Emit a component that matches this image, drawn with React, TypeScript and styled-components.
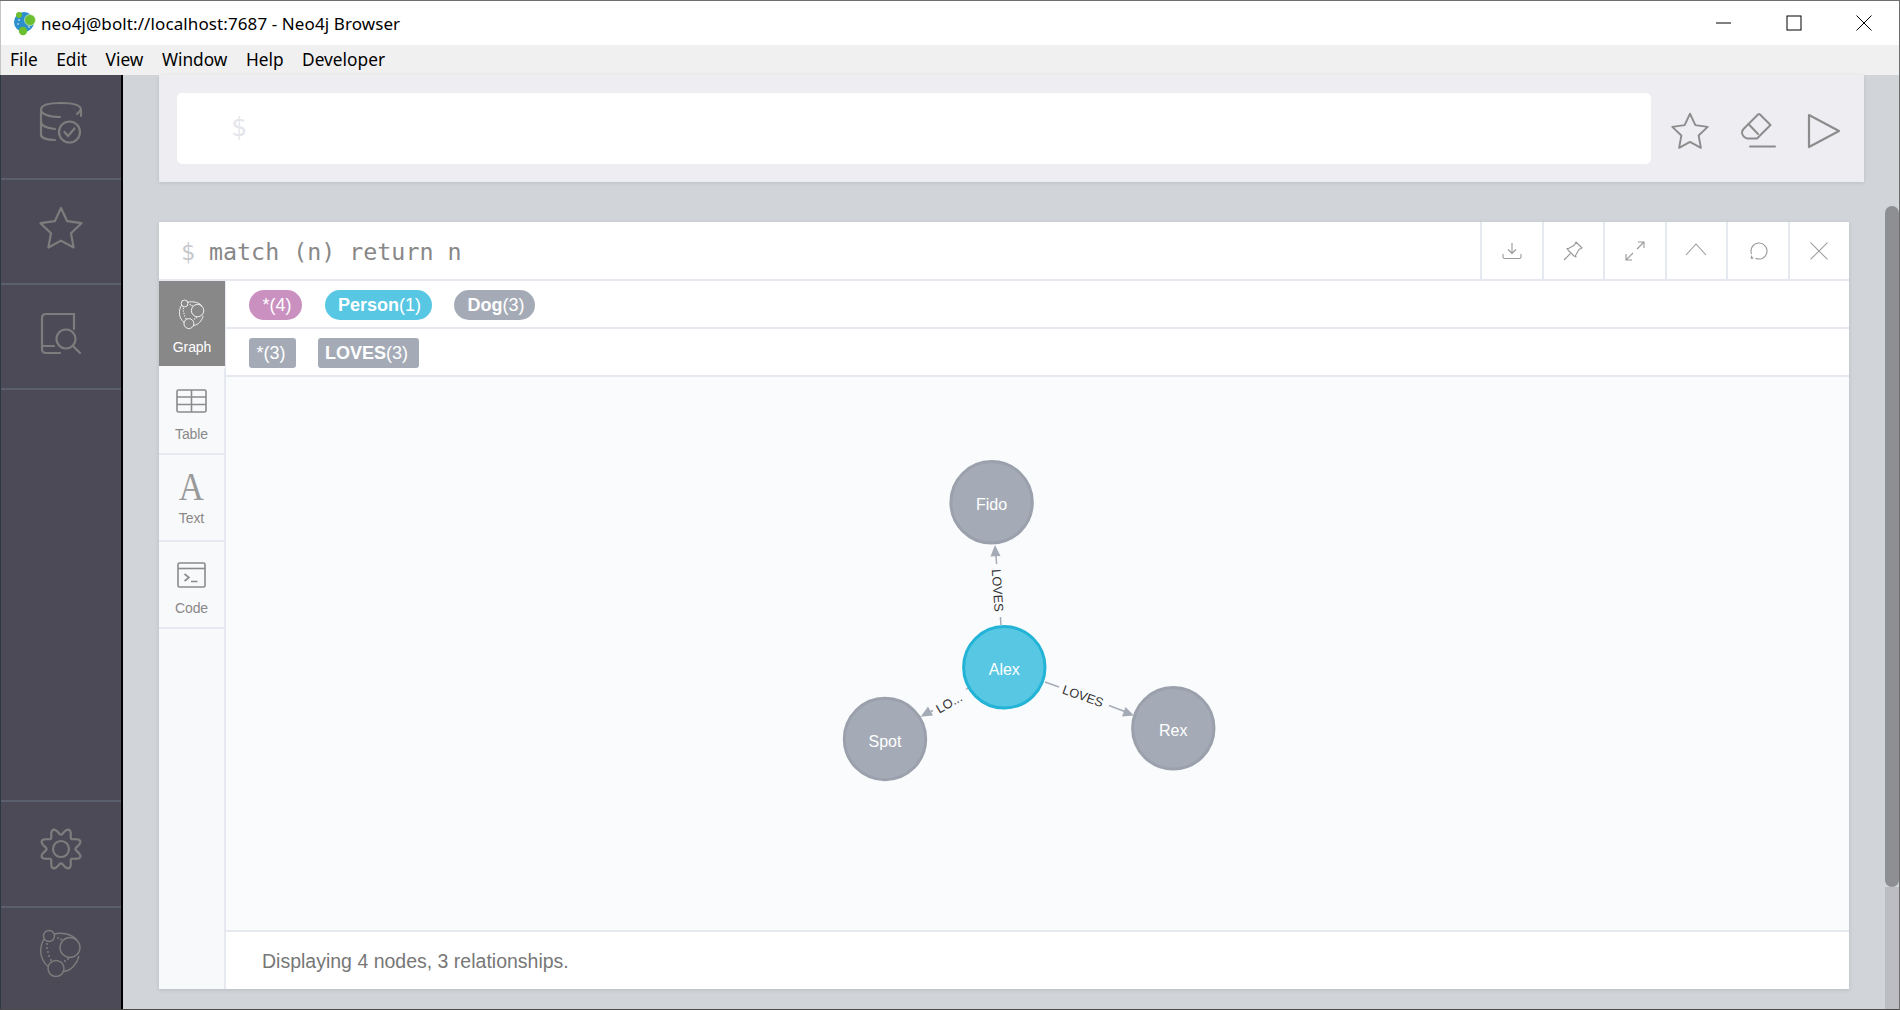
import styled, { createGlobalStyle } from "styled-components";

const GlobalStyle = createGlobalStyle`
  html, body {
    margin: 0;
    padding: 0;
    background: #d1d5da;
  }
  * {
    box-sizing: border-box;
  }
`;

const Window = styled.div`
  width: 1900px;
  height: 1010px;
  display: flex;
  flex-direction: column;
  overflow: hidden;
  border-top: 1px solid #6e6e6e;
  border-right: 1px solid #6e6e6e;
  border-bottom: 1px solid #4a4a4a;
  font-family: "Liberation Sans", Arial, sans-serif;
`;

const TitleBar = styled.div`
  height: 44px;
  flex: none;
  display: flex;
  align-items: center;
  background: #fff;
  padding-left: 12px;
  border-left: 1px solid #c4c4c4;
`;

const TitleText = styled.span`
  margin-left: 4px;
  font-family: "Noto Sans", sans-serif;
  font-size: 17px;
  letter-spacing: 0.1px;
  color: #000;
  white-space: nowrap;
`;

const WindowControls = styled.div`
  margin-left: auto;
  display: flex;
  align-items: center;
`;

const ControlBox = styled.span`
  width: 70px;
  height: 44px;
  display: flex;
  align-items: center;
  justify-content: center;
`;

const MenuBar = styled.div`
  height: 30px;
  flex: none;
  display: flex;
  align-items: center;
  background: #f0f0f0;
  padding: 0 0 2px 9px;
  gap: 18.5px;
  border-left: 1px solid #c4c4c4;
`;

const MenuItem = styled.span`
  font-family: "Noto Sans", sans-serif;
  font-size: 17.3px;
  color: #000;
`;

const Body = styled.div`
  flex: 1;
  min-height: 0;
  display: flex;
`;

const Sidebar = styled.nav`
  width: 123px;
  flex: none;
  display: flex;
  flex-direction: column;
  justify-content: space-between;
  background: #4d4a57;
  border-left: 1px solid #2b3a42;
  border-right: 2px solid #000;
`;

const SideGroup = styled.div`
  display: flex;
  flex-direction: column;
`;

const SideItem = styled.div<{ $top?: boolean; $height: number; $pad?: number }>`
  height: ${(p) => p.$height}px;
  display: flex;
  align-items: center;
  justify-content: center;
  padding-bottom: ${(p) => p.$pad ?? 8}px;
  ${(p) =>
    p.$top
      ? "border-top: 2px solid #5b5f6e;"
      : "border-bottom: 2px solid #5b5f6e;"}
`;

const Main = styled.main`
  flex: 1;
  min-width: 0;
  padding-left: 36px;
  display: flex;
  flex-direction: column;
`;

const EditorFrame = styled.section`
  width: 1705px;
  height: 107px;
  flex: none;
  display: flex;
  align-items: center;
  padding-left: 18px;
  background: #eeeef2;
  box-shadow: 0 1px 4px rgba(0, 0, 0, 0.1);
`;

const EditorInput = styled.div`
  width: 1474px;
  height: 71px;
  display: flex;
  align-items: center;
  padding: 0 0 4px 54px;
  background: #fff;
  border-radius: 5px;
`;

const Prompt = styled.span<{ $light?: boolean }>`
  font-family: "DejaVu Sans Mono", monospace;
  font-size: ${(p) => (p.$light ? "26px" : "23.3px")};
  color: ${(p) => (p.$light ? "#e4e6ec" : "#c6c9cc")};
`;

const EditorActions = styled.div`
  display: flex;
  align-items: center;
  margin: 5px 0 0 20px;
  gap: 30px;
`;

const Result = styled.section`
  width: 1690px;
  height: 767px;
  margin-top: 40px;
  flex: none;
  display: flex;
  flex-direction: column;
  background: #fff;
  box-shadow: 0 1px 4px rgba(0, 0, 0, 0.12);
`;

const ResultHeader = styled.header`
  height: 59px;
  flex: none;
  display: flex;
  align-items: stretch;
  border-bottom: 2px solid #e6e9ef;
`;

const Command = styled.div`
  flex: 1;
  display: flex;
  align-items: center;
  padding: 2px 0 0 22px;
  gap: 14px;
  font-family: "DejaVu Sans Mono", monospace;
  font-size: 23.3px;
  color: #888;
`;

const HeaderButton = styled.div`
  width: 61.5px;
  display: flex;
  align-items: center;
  justify-content: center;
  border-left: 2px solid #e6e9ef;
`;

const ResultBody = styled.div`
  flex: 1;
  min-height: 0;
  display: flex;
`;

const Tabs = styled.div`
  width: 67px;
  flex: none;
  display: flex;
  flex-direction: column;
  background: #f8f9fb;
  border-right: 2px solid #e6e9ef;
`;

const Tab = styled.div<{ $active?: boolean }>`
  height: 87px;
  flex: none;
  display: flex;
  flex-direction: column;
  align-items: center;
  padding-top: 13px;
  font-size: 14px;
  letter-spacing: -0.1px;
  background: ${(p) => (p.$active ? "#888" : "transparent")};
  background-clip: padding-box;
  color: ${(p) => (p.$active ? "#fff" : "#888")};
  border-bottom: 2px solid ${(p) => (p.$active ? "#f8f9fb" : "#e6e9ef")};
  margin-right: ${(p) => (p.$active ? "-1px" : "0")};
`;

const TabIcon = styled.div`
  height: 40px;
  display: flex;
  align-items: center;
  justify-content: center;
`;

const TabLabel = styled.span<{ $lift?: boolean }>`
  margin-top: ${(p) => (p.$lift ? "0" : "3px")};
  line-height: 20px;
`;

const TextGlyph = styled.span`
  font-family: "Liberation Serif", serif;
  font-size: 40px;
  line-height: 40px;
  color: #9a9a9a;
  transform: translateY(-1px) scaleX(0.87);
`;

const Content = styled.div`
  flex: 1;
  min-width: 0;
  display: flex;
  flex-direction: column;
`;

const LegendRow = styled.div<{ $gap: number }>`
  height: 48px;
  flex: none;
  display: flex;
  align-items: flex-start;
  padding: 9px 0 0 23px;
  gap: ${(p) => p.$gap}px;
  border-bottom: 2px solid #e6e9ef;
`;

const Chip = styled.span<{ $color: string; $pill?: boolean }>`
  height: 30px;
  display: inline-flex;
  align-items: center;
  padding: ${(p) => (p.$pill ? "0 10.5px 0 13.5px" : "0 10.5px 0 7.5px")};
  border-radius: ${(p) => (p.$pill ? "15px" : "3px")};
  background: ${(p) => p.$color};
  color: #fff;
  font-size: 18px;
  white-space: nowrap;
`;

const ChipName = styled.b`
  font-weight: 700;
`;

const GraphArea = styled.div`
  flex: 1;
  min-height: 0;
  background: #fafbfd;
`;

const GraphSvg = styled.svg`
  display: block;
  width: 100%;
  height: 100%;
`;

const NodeLabel = styled.text`
  font-family: "Liberation Sans", Arial, sans-serif;
  font-size: 16px;
  fill: #fff;
  text-anchor: middle;
`;

const EdgeLabel = styled.text`
  font-family: "Liberation Sans", Arial, sans-serif;
  font-size: 12.75px;
  fill: #333;
  text-anchor: middle;
`;

const Footer = styled.footer`
  height: 59px;
  flex: none;
  display: flex;
  align-items: center;
  padding: 1px 0 0 36px;
  border-top: 2px solid #e6e9ef;
  font-size: 19.5px;
  color: #777;
`;

const Scrollbar = styled.div`
  width: 14px;
  flex: none;
  display: flex;
  flex-direction: column;
`;

const ScrollGap = styled.div`
  height: 131px;
  flex: none;
`;

const ScrollThumb = styled.div`
  height: 681px;
  flex: none;
  background: #8e8f93;
  border-radius: 8px;
`;

const ScrollTrack = styled.div`
  flex: 1;
  background: #bcbdc2;
`;

function AppIcon() {
  return (
    <svg width="24" height="26" viewBox="0 0 24 26">
      <circle cx="11" cy="12" r="10" fill="#2a8fcb" />
      <circle cx="17" cy="10" r="5.5" fill="#6cbf30" stroke="#e8f4ea" strokeWidth="0.6" />
      <circle cx="6" cy="5" r="3" fill="#6cbf30" />
      <circle cx="10" cy="21" r="4.2" fill="#6cbf30" />
      <circle cx="6" cy="10" r="0.8" fill="#fff" />
      <circle cx="5" cy="14" r="0.8" fill="#fff" />
      <circle cx="16" cy="17" r="0.8" fill="#fff" />
    </svg>
  );
}

function MinIcon() {
  return (
    <svg width="16" height="2" viewBox="0 0 16 2">
      <path d="M0 1H15" stroke="#000" strokeWidth="1" />
    </svg>
  );
}

function MaxIcon() {
  return (
    <svg width="16" height="16" viewBox="0 0 16 16" fill="none">
      <rect x="1" y="1" width="14" height="14" stroke="#000" strokeWidth="1" />
    </svg>
  );
}

function CloseIcon({ size, color }: { size: number; color: string }) {
  return (
    <svg width={size} height={size} viewBox="0 0 16 16" fill="none">
      <path d="M0.5 0.5L15.5 15.5M15.5 0.5L0.5 15.5" stroke={color} strokeWidth={size > 16 ? 0.9 : 1} />
    </svg>
  );
}

function DatabaseIcon() {
  return (
    <svg width="44" height="44" viewBox="0 0 44 44" fill="none" stroke="#7d7d7d" strokeWidth="2.2" strokeLinecap="round">
      <path d="M2 9C2 4 10 2 22 2C34 2 42 4 42 9V15" />
      <path d="M42 9L38 13" />
      <path d="M2 9V34C2 37 8 39 16 39" />
      <path d="M2 9C2 13 10 16 21 16" />
      <path d="M2 21C2 25 8 27 16 28" />
      <circle cx="30.5" cy="31" r="10.5" />
      <path d="M25.5 31L29 35L35.5 27.5" />
    </svg>
  );
}

function StarIcon({ size, color, width }: { size: number; color: string; width: number }) {
  return (
    <svg width={size} height={size} viewBox="0 0 44 44" fill="none" stroke={color} strokeWidth={width} strokeLinejoin="round">
      <path d="M22 2L28.2 15.2L42.5 17.2L32 27.2L34.6 41.5L22 34.6L9.4 41.5L12 27.2L1.5 17.2L15.8 15.2Z" />
    </svg>
  );
}

function SearchDocIcon() {
  return (
    <svg width="44" height="44" viewBox="0 0 44 44" fill="none" stroke="#7d7d7d" strokeWidth="2.2" strokeLinecap="round">
      <path d="M35 18V3H7C4 3 3 5 3 7V38C3 41 4 42 7 42H21" />
      <path d="M3 35H15" />
      <circle cx="27" cy="28" r="9.5" />
      <path d="M34 35L41 42" />
    </svg>
  );
}

function GearIcon() {
  // wavy ring with eight lobes
  const points: string[] = [];
  for (let i = 0; i < 160; i++) {
    const a = (i / 160) * Math.PI * 2;
    const r = 17.6 - 3.2 * Math.cos(8 * a);
    points.push(`${(22 + r * Math.sin(a)).toFixed(2)},${(22 - r * Math.cos(a)).toFixed(2)}`);
  }
  return (
    <svg width="44" height="44" viewBox="0 0 44 44" fill="none" stroke="#7d7d7d" strokeWidth="2.2">
      <polygon points={points.join(" ")} />
      <circle cx="22" cy="22" r="8" />
    </svg>
  );
}

function Neo4jLogo({ width, height, color }: { width: number; height: number; color: string }) {
  return (
    <svg width={width} height={height} viewBox="0 0 42 48" fill="none" stroke={color} strokeWidth="1.4">
      <circle cx="9" cy="7" r="5.5" />
      <circle cx="30" cy="18.5" r="10" />
      <circle cx="16" cy="39.5" r="8" />
      <path d="M4 10C0 16 0 24 2 29C3.5 33 6 36 8.5 38" />
      <path d="M14 5C22 3 32 5 37 11" />
      <path d="M23.5 42.5C31 42 37 35 39 27" />
      <g fill={color} stroke="none">
        <circle cx="18" cy="9" r="1" />
        <circle cx="21" cy="10.5" r="1" />
        <circle cx="7" cy="15" r="1" />
        <circle cx="7" cy="19" r="1" />
        <circle cx="8" cy="23" r="1" />
        <circle cx="9" cy="27" r="1" />
        <circle cx="11" cy="31" r="1" />
        <circle cx="25" cy="32" r="1" />
        <circle cx="28" cy="30" r="1" />
      </g>
    </svg>
  );
}

function EraserIcon() {
  return (
    <svg width="38" height="38" viewBox="0 0 38 38" fill="none" stroke="#8c8c8c" strokeWidth="2" strokeLinecap="round" strokeLinejoin="round">
      <path d="M21 2.5L31.5 13L18 26.5H8.5C6 26.5 2.5 23 3 20C3.2 18.5 4 17.5 5 16.5L19 2.5C19.6 2 20.4 2 21 2.5Z" />
      <path d="M9.5 12L19 22" />
      <path d="M11 34.5H36" />
    </svg>
  );
}

function PlayIcon() {
  return (
    <svg width="34" height="36" viewBox="0 0 34 36" fill="none" stroke="#8c8c8c" strokeWidth="2.2" strokeLinejoin="round">
      <path d="M2 2L32 18L2 34Z" />
    </svg>
  );
}

function DownloadIcon() {
  return (
    <svg width="20" height="18" viewBox="0 0 20 18" fill="none" stroke="#999" strokeWidth="1.1">
      <path d="M10 1V11M6 7.5L10 11.5L14 7.5" />
      <path d="M1 12V15C1 16 2 16.5 3 16.5H17C18 16.5 19 16 19 15V12" />
    </svg>
  );
}

function PinIcon() {
  return (
    <svg width="20" height="20" viewBox="0 0 20 20" fill="none" stroke="#999" strokeWidth="1.1" strokeLinejoin="round">
      <path d="M13 1L19 7L16 8.5L12.5 14.5L13 16L11 15L5 9L4 7.5L5.5 7.5L11.5 4L13 1Z" />
      <path d="M7.5 12.5L1 19" />
    </svg>
  );
}

function ExpandIcon() {
  return (
    <svg width="20" height="20" viewBox="0 0 20 20" fill="none" stroke="#999" strokeWidth="1.1">
      <path d="M12 8L19 1M13 1H19V7" />
      <path d="M8 12L1 19M1 13V19H7" />
    </svg>
  );
}

function ChevronUpIcon() {
  return (
    <svg width="22" height="16" viewBox="0 0 22 16" fill="none" stroke="#999" strokeWidth="1.1">
      <path d="M1 12L11 1L21 12" />
    </svg>
  );
}

function RefreshIcon() {
  return (
    <svg width="20" height="18" viewBox="0 0 20 18" fill="none" stroke="#999" strokeWidth="1.1">
      <path d="M3.6 12A8 8 0 1 1 7.5 16.2" />
      <path d="M2.5 16.8H5.5L3.3 13Z" fill="#999" stroke="none" />
    </svg>
  );
}

function TableIcon() {
  return (
    <svg width="31" height="24" viewBox="0 0 31 24" fill="none" stroke="#8b8b8b" strokeWidth="1.6">
      <rect x="1" y="1" width="29" height="22" rx="1.5" />
      <path d="M1 8H30M1 15.5H30M15.5 1V23" />
    </svg>
  );
}

function CodeIcon() {
  return (
    <svg width="29" height="26" viewBox="0 0 29 26" fill="none" stroke="#8b8b8b" strokeWidth="1.6">
      <rect x="1" y="1" width="27" height="24" rx="1.5" />
      <path d="M1 6.5H28" />
      <path d="M7.5 12L12 15.5L7.5 19M14 19.5H20.5" />
    </svg>
  );
}

type EdgeTextProps = { x: number; y: number; angle: number; text: string };

function EdgeText({ x, y, angle, text }: EdgeTextProps) {
  return (
    <EdgeLabel x={x} y={y} dy="4.5" transform={`rotate(${angle} ${x} ${y})`}>
      {text}
    </EdgeLabel>
  );
}

const nodes = [
  { name: "Fido", x: 991.6, y: 502.3, fill: "#a5abb6", stroke: "#9aa1ac" },
  { name: "Alex", x: 1004.3, y: 667.3, fill: "#57c7e3", stroke: "#23b3d7" },
  { name: "Spot", x: 885, y: 739, fill: "#a5abb6", stroke: "#9aa1ac" },
  { name: "Rex", x: 1173.3, y: 728.3, fill: "#a5abb6", stroke: "#9aa1ac" },
];

export default function App() {
  return (
    <>
      <GlobalStyle />
      <Window>
        <TitleBar>
          <AppIcon />
          <TitleText>neo4j@bolt://localhost:7687 - Neo4j Browser</TitleText>
          <WindowControls>
            <ControlBox><MinIcon /></ControlBox>
            <ControlBox><MaxIcon /></ControlBox>
            <ControlBox><CloseIcon size={16} color="#000" /></ControlBox>
          </WindowControls>
        </TitleBar>
        <MenuBar>
          <MenuItem>File</MenuItem>
          <MenuItem>Edit</MenuItem>
          <MenuItem>View</MenuItem>
          <MenuItem>Window</MenuItem>
          <MenuItem>Help</MenuItem>
          <MenuItem>Developer</MenuItem>
        </MenuBar>
        <Body>
          <Sidebar>
            <SideGroup>
              <SideItem $height={105}><DatabaseIcon /></SideItem>
              <SideItem $height={105}><StarIcon size={44} color="#7d7d7d" width={2.2} /></SideItem>
              <SideItem $height={105}><SearchDocIcon /></SideItem>
            </SideGroup>
            <SideGroup>
              <SideItem $top $height={106} $pad={10}><GearIcon /></SideItem>
              <SideItem $top $height={103} $pad={12}><Neo4jLogo width={42} height={48} color="#7d7d7d" /></SideItem>
            </SideGroup>
          </Sidebar>
          <Main>
            <EditorFrame>
              <EditorInput>
                <Prompt $light>$</Prompt>
              </EditorInput>
              <EditorActions>
                <StarIcon size={38} color="#8c8c8c" width={2.2} />
                <EraserIcon />
                <PlayIcon />
              </EditorActions>
            </EditorFrame>
            <Result>
              <ResultHeader>
                <Command>
                  <Prompt>$</Prompt>
                  <span>match (n) return n</span>
                </Command>
                <HeaderButton><DownloadIcon /></HeaderButton>
                <HeaderButton><PinIcon /></HeaderButton>
                <HeaderButton><ExpandIcon /></HeaderButton>
                <HeaderButton><ChevronUpIcon /></HeaderButton>
                <HeaderButton><RefreshIcon /></HeaderButton>
                <HeaderButton><CloseIcon size={18} color="#999" /></HeaderButton>
              </ResultHeader>
              <ResultBody>
                <Tabs>
                  <Tab $active>
                    <TabIcon><Neo4jLogo width={26} height={30} color="#fff" /></TabIcon>
                    <TabLabel>Graph</TabLabel>
                  </Tab>
                  <Tab>
                    <TabIcon><TableIcon /></TabIcon>
                    <TabLabel>Table</TabLabel>
                  </Tab>
                  <Tab>
                    <TabIcon><TextGlyph>A</TextGlyph></TabIcon>
                    <TabLabel $lift>Text</TabLabel>
                  </Tab>
                  <Tab>
                    <TabIcon><CodeIcon /></TabIcon>
                    <TabLabel>Code</TabLabel>
                  </Tab>
                </Tabs>
                <Content>
                  <LegendRow $gap={22.5}>
                    <Chip $pill $color="#c990c0">*(4)</Chip>
                    <Chip $pill $color="#57c7e3"><ChipName>Person</ChipName>(1)</Chip>
                    <Chip $pill $color="#a5abb6"><ChipName>Dog</ChipName>(3)</Chip>
                  </LegendRow>
                  <LegendRow $gap={21.5}>
                    <Chip $color="#a5abb6">*(3)</Chip>
                    <Chip $color="#a5abb6"><ChipName>LOVES</ChipName>(3)</Chip>
                  </LegendRow>
                  <GraphArea>
                    <GraphSvg viewBox="226 377 1623 553">
                      <g stroke="#a5abb6" strokeWidth="1.5" fill="none">
                        <path d="M1001 625L1000.4 617" />
                        <path d="M996.6 564L995.8 554" />
                        <path d="M1045 682L1059 687" />
                        <path d="M1109 705.5L1126 712" />
                        <path d="M968 688L966 689.5" />
                        <path d="M933 710.5L928 713" />
                      </g>
                      <g fill="#a5abb6">
                        <path d="M995 545L1000.5 556L990.5 556.5Z" />
                        <path d="M1134 715.5L1122 716.5L1125.5 707Z" />
                        <path d="M920.7 716.7L928 706.5L933 715.5Z" />
                      </g>
                      <EdgeText x={997.7} y={590.5} angle={86} text="LOVES" />
                      <EdgeText x={1083} y={696} angle={19} text="LOVES" />
                      <EdgeText x={949} y={703} angle={-30} text="LO..." />
                      {nodes.map((n) => (
                        <g key={n.name}>
                          <circle cx={n.x} cy={n.y} r="40.7" fill={n.fill} stroke={n.stroke} strokeWidth="3" />
                          <NodeLabel x={n.x} y={n.y + 8}>{n.name}</NodeLabel>
                        </g>
                      ))}
                    </GraphSvg>
                  </GraphArea>
                  <Footer>Displaying 4 nodes, 3 relationships.</Footer>
                </Content>
              </ResultBody>
            </Result>
          </Main>
          <Scrollbar>
            <ScrollGap />
            <ScrollThumb />
            <ScrollTrack />
          </Scrollbar>
        </Body>
      </Window>
    </>
  );
}
